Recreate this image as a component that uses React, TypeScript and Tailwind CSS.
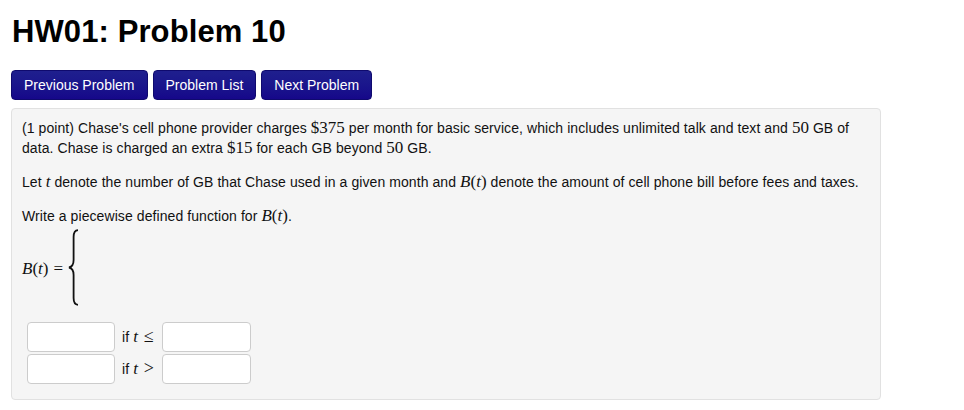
import React from "react";

const sans = { fontFamily: '"Liberation Sans", Arial, sans-serif' };

function M({ children, i = false }: { children: React.ReactNode; i?: boolean }) {
  // inline math bits render in a serif face, slightly larger than body text
  return (
    <span
      className={`text-[17px] leading-none tracking-normal font-['Liberation_Serif',serif] ${i ? "italic" : ""}`}
    >
      {children}
    </span>
  );
}

function Brace() {
  return (
    <svg width="11" height="77" viewBox="0 0 11 77" className="block">
      <path
        d="M10 1.2 C6.5 1.4 5.6 3.6 5.6 8 L5.6 31 C5.6 35.6 4 37.8 1 38.5 C4 39.2 5.6 41.4 5.6 46 L5.6 69 C5.6 73.4 6.5 75.6 10 75.8"
        fill="none"
        stroke="#111"
        strokeWidth="1.8"
      />
    </svg>
  );
}

const navButtons = ["Previous Problem", "Problem List", "Next Problem"];

export default function App() {
  return (
    <div className="w-[964px] h-[410px] bg-white text-black pl-[11px] overflow-hidden" style={sans}>
      <h1 className="mt-[16px] ml-[1px] text-[31px] leading-[31px] font-bold tracking-[0.1px]">HW01: Problem 10</h1>

      <div className="mt-[23px] flex gap-[5px]">
        {navButtons.map((label) => (
          <button
            key={label}
            className="h-[30px] px-[12px] rounded-[4px] bg-gradient-to-b from-[#1f1f8e] to-[#16078a] text-white text-[14px] leading-none border border-[#0f0a6e]"
          >
            {label}
          </button>
        ))}
      </div>

      <div className="mt-[8px] w-[870px] h-[292px] bg-[#f5f5f5] border border-[#e1e1e1] rounded-[4px] pt-[9px] px-[10px] text-[14px] leading-[20px] text-[#111] tracking-[0.08px]">
        <p>
          (1 point) Chase's cell phone provider charges <M>$375</M> per month for basic service, which
          includes unlimited talk and text and <M>50</M> GB of data. Chase is charged an extra{" "}
          <M>$15</M> for each GB beyond <M>50</M> GB.
        </p>
        <p className="mt-[14px]">
          Let <M i>t</M> denote the number of GB that Chase used in a given month and{" "}
          <M>
            <span className="italic">B</span>(<span className="italic">t</span>)
          </M>{" "}
          denote the amount of cell phone bill before fees and taxes.
        </p>
        <p className="mt-[14px]">
          Write a piecewise defined function for{" "}
          <M>
            <span className="italic">B</span>(<span className="italic">t</span>)
          </M>
          .
        </p>

        <div className="mt-[3px] flex items-center h-[77px]">
          <span className="text-[17px] font-['Liberation_Serif',serif] mt-[2px] tracking-normal">
            <span className="italic">B</span>(<span className="italic">t</span>)
            <span className="ml-[5px]">=</span>
          </span>
          <span className="ml-[5px]">
            <Brace />
          </span>
        </div>

        <div className="mt-[16px] pl-[5px] flex flex-col gap-[2px]">
          {[
            <>
              if <M i>t</M> <span className="ml-[2px] text-[18px] leading-none font-['Liberation_Serif',serif]">≤</span>
            </>,
            <>
              if <M i>t</M> <span className="ml-[2px] text-[18px] leading-none font-['Liberation_Serif',serif]">&gt;</span>
            </>,
          ].map((cond, k) => (
            <div key={k} className="flex items-center">
              <input className="w-[88px] h-[30px] bg-white border border-[#cccccc] rounded-[4px] outline-none" />
              <span className="w-[47px] pl-[7px] text-[14px]">{cond}</span>
              <input className="w-[89px] h-[30px] bg-white border border-[#cccccc] rounded-[4px] outline-none" />
            </div>
          ))}
        </div>
      </div>
    </div>
  );
}
